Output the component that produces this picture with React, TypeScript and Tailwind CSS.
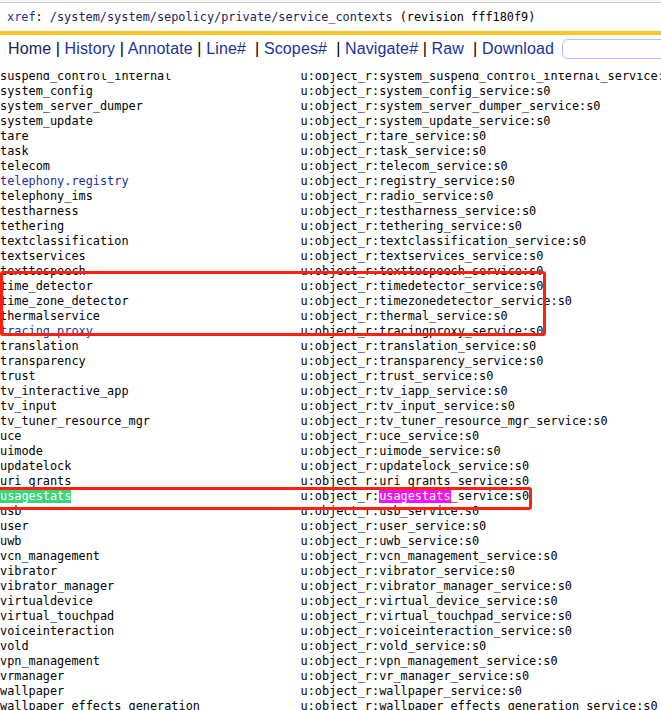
const services: [string, string][] = [
  ["suspend_control_internal", "system_suspend_control_internal_service"],
  ["system_config", "system_config_service"],
  ["system_server_dumper", "system_server_dumper_service"],
  ["system_update", "system_update_service"],
  ["tare", "tare_service"],
  ["task", "task_service"],
  ["telecom", "telecom_service"],
  ["telephony.registry", "registry_service"],
  ["telephony_ims", "radio_service"],
  ["testharness", "testharness_service"],
  ["tethering", "tethering_service"],
  ["textclassification", "textclassification_service"],
  ["textservices", "textservices_service"],
  ["texttospeech", "texttospeech_service"],
  ["time_detector", "timedetector_service"],
  ["time_zone_detector", "timezonedetector_service"],
  ["thermalservice", "thermal_service"],
  ["tracing.proxy", "tracingproxy_service"],
  ["translation", "translation_service"],
  ["transparency", "transparency_service"],
  ["trust", "trust_service"],
  ["tv_interactive_app", "tv_iapp_service"],
  ["tv_input", "tv_input_service"],
  ["tv_tuner_resource_mgr", "tv_tuner_resource_mgr_service"],
  ["uce", "uce_service"],
  ["uimode", "uimode_service"],
  ["updatelock", "updatelock_service"],
  ["uri_grants", "uri_grants_service"],
  ["usagestats", "usagestats_service"],
  ["usb", "usb_service"],
  ["user", "user_service"],
  ["uwb", "uwb_service"],
  ["vcn_management", "vcn_management_service"],
  ["vibrator", "vibrator_service"],
  ["vibrator_manager", "vibrator_manager_service"],
  ["virtualdevice", "virtual_device_service"],
  ["virtual_touchpad", "virtual_touchpad_service"],
  ["voiceinteraction", "voiceinteraction_service"],
  ["vold", "vold_service"],
  ["vpn_management", "vpn_management_service"],
  ["vrmanager", "vr_manager_service"],
  ["wallpaper", "wallpaper_service"],
  ["wallpaper_effects_generation", "wallpaper_effects_generation_service"],
];

const menu = ["History", "Annotate", "Line# ", "Scopes# ", "Navigate#", "Raw ", "Download"];

function ServiceRow({ name, label }: { name: string; label: string }) {
  const found = name === "usagestats";
  const linked = name.includes(".");
  return (
    <div className="flex h-[15px] shrink-0 whitespace-pre leading-[15px]">
      <div className="w-[300.6px] shrink-0">
        <span className={found ? "bg-[#37d67a] text-white" : linked ? "text-[#2030a2]" : ""}>{name}</span>
      </div>
      <div>
        u:object_r:
        {found ? (
          <>
            <span className="bg-[#f013f5] text-white">usagestats</span>_service
          </>
        ) : (
          label
        )}
        :s0
      </div>
    </div>
  );
}

export default function App() {
  return (
    <div className="relative flex h-[710px] w-[661px] flex-col overflow-hidden bg-white font-['DejaVu_Sans_Mono',monospace] text-[11.87px] text-black">
      <header className="shrink-0">
        <div className="h-[3px] border-b border-[#c8c8c8] bg-[#f7f7f7]" />
        <div className="flex h-7 items-center whitespace-pre pl-[7px] pt-px">
          <span className="text-[#2030a2]">xref</span>
          <span>: </span>
          <span className="text-[#202060]">/system/system/sepolicy/private/service_contexts</span>
          <span> (revision fff180f9)</span>
        </div>
        <div className="h-1 bg-[#ffc726]" />
        <nav className="flex h-[38px] whitespace-pre pl-2 pt-[3px] font-['Liberation_Sans',Arial,sans-serif] text-base leading-[22px] tracking-[0.12px]">
          <span className="text-[#202060]">Home</span>
          {menu.map((item) => (
            <span key={item}>
              {" | "}
              <span className="text-[#2030a2]">{item}</span>
            </span>
          ))}
          <input aria-label="Search" className="ml-2 mt-px h-5 w-[180px] shrink-0 rounded-[6px] border border-[#b8b8ff] bg-white outline-none" />
        </nav>
      </header>
      <main className="min-h-0 flex-1 overflow-hidden">
        <div className="-mt-1 flex flex-col">
          {services.map(([name, label]) => (
            <ServiceRow key={name} name={name} label={label} />
          ))}
        </div>
      </main>
      <div className="absolute left-0 top-[271px] h-[65px] w-[546px] rounded-[3px] border-[3px] border-[#ff2010]" />
      <div className="absolute -left-1 top-[487px] h-[23px] w-[536px] rounded-[3px] border-[3px] border-[#ff2010]" />
    </div>
  );
}
